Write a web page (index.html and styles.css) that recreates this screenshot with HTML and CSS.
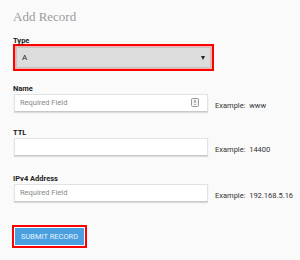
FILE: index.html
```html
<!DOCTYPE html>
<html>
<head>
<meta charset="utf-8">
<link rel="stylesheet" href="styles.css">
</head>
<body>
<div class="page">
  <h2 class="title">Add Record</h2>
  <div class="group group-type">
    <label class="label">Type</label>
    <div class="select-wrap">
      <div class="select"><span>A</span><span class="arrow"></span></div>
    </div>
  </div>
  <div class="group group-name">
    <label class="label">Name</label>
    <div class="row">
      <div class="input placeholder">Required Field
        <svg class="key" width="8" height="9" viewBox="0 0 8 9"><rect x="0.5" y="0.5" width="7" height="8" rx="1" fill="#f4f4f4" stroke="#999"/><rect x="3.5" y="2" width="1" height="3" fill="#777"/><rect x="3.5" y="6" width="1" height="1" fill="#777"/></svg>
      </div>
      <span class="example">Example:&nbsp; www</span>
    </div>
  </div>
  <div class="group">
    <label class="label">TTL</label>
    <div class="row">
      <div class="input"></div>
      <span class="example">Example:&nbsp; 14400</span>
    </div>
  </div>
  <div class="group group-ip">
    <label class="label">IPv4 Address</label>
    <div class="row">
      <div class="input placeholder">Required Field</div>
      <span class="example">Example:&nbsp; 192.168.5.16</span>
    </div>
  </div>
  <div class="btn-wrap">
    <button class="btn">SUBMIT RECORD</button>
  </div>
</div>
</body>
</html>
```

FILE: styles.css
```css
html, body {
  margin: 0;
  padding: 0;
  background: #fafafa;
}
.page {
  padding: 9px 0 0 13px;
  font-family: Roboto, "Liberation Sans", sans-serif;
}
.title {
  margin: 0;
  font-family: "Liberation Serif", serif;
  font-weight: normal;
  font-size: 13px;
  line-height: 16px;
  color: #9a9a9a;
}
.group {
  margin-top: 17px;
}
.group-type {
  margin-top: 12px;
}
.group-name {
  margin-top: 14px;
}
.group-ip {
  margin-top: 19px;
}
.label {
  display: block;
  font-size: 7.5px;
  font-weight: bold;
  color: #222;
  line-height: 8px;
  height: 7px;
}
.select-wrap {
  width: 195px;
  border: 2px solid #ff0000;
  padding: 1px;
  background: #f6b0b0;
}
.select {
  height: 19px;
  background: #dcdcdc;
  border: 1px solid #c4c4c4;
  display: flex;
  align-items: center;
  justify-content: space-between;
  padding: 0 5px 0 5px;
  font-size: 8px;
  color: #222;
}
.arrow {
  width: 0;
  height: 0;
  border-left: 2.5px solid transparent;
  border-right: 2.5px solid transparent;
  border-top: 4px solid #222;
}
.row {
  display: flex;
  align-items: center;
  margin-top: 2px;
}
.input {
  position: relative;
  box-sizing: border-box;
  width: 194px;
  height: 18px;
  margin-left: 1px;
  background: #fff;
  border: 1px solid #e2e2e2;
  border-bottom: 1px solid #c8c8c8;
  box-shadow: 0 1px 1px rgba(0,0,0,0.12);
  font-size: 7.5px;
  line-height: 16px;
  padding-left: 5px;
  color: #888;
}
.key {
  position: absolute;
  right: 8px;
  top: 3px;
}
.example {
  margin-left: 7px;
  font-size: 7.5px;
  color: #333;
  padding-top: 5px;
}
.btn-wrap {
  margin-top: 23px;
  margin-left: -1px;
  display: inline-block;
  border: 2px solid #ff0000;
  padding: 0;
}
.btn {
  display: block;
  border: 1px solid #fff;
  background: #4a9fe0;
  color: #e8f2fb;
  font-family: Roboto, "Liberation Sans", sans-serif;
  font-size: 7.5px;
  height: 19px;
  padding: 0 6px;
  border-radius: 1px;
}
```
